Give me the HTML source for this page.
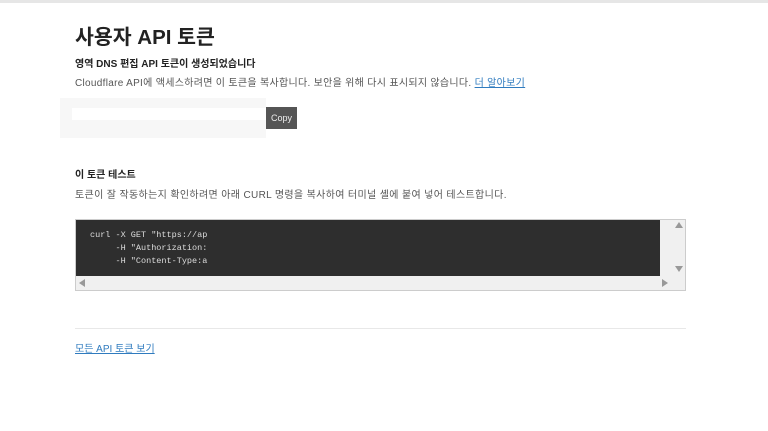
<!DOCTYPE html>
<html><head><meta charset="utf-8"><style>
body{margin:0;width:768px;height:431px;background:#fff;position:relative;overflow:hidden;font-family:"Liberation Sans","Noto Sans CJK KR",sans-serif;color:#333}
.top{position:absolute;left:0;top:0;width:768px;height:3px;background:#e6e6e6}
.a{position:absolute;white-space:nowrap}
a{color:#2f7bbf;text-decoration:underline}
</style></head><body>
<div class="top"></div>
<div class="a" style="left:75px;top:20px;font-size:20.5px;font-weight:bold;color:#222">사용자 API 토큰</div>
<div class="a" style="left:75px;top:55px;font-size:10px;font-weight:bold;color:#222">영역 DNS 편집 API 토큰이 생성되었습니다</div>
<div class="a" style="left:75px;top:74px;font-size:10px;letter-spacing:0.3px;color:#555">Cloudflare API에 액세스하려면 이 토큰을 복사합니다. 보안을 위해 다시 표시되지 않습니다. <a>더 알아보기</a></div>
<div class="a" style="left:60px;top:98px;width:206px;height:40px;background:#f7f7f7"></div>
<div class="a" style="left:72px;top:108px;width:194px;height:12px;background:#fff"></div>
<div class="a" style="left:266px;top:107px;width:31px;height:22px;background:#555;color:#eee;font-size:9px;line-height:22px;text-align:center">Copy</div>
<div class="a" style="left:75px;top:166px;font-size:10px;font-weight:bold;color:#222">이 토큰 테스트</div>
<div class="a" style="left:75px;top:186px;font-size:10px;letter-spacing:0.35px;color:#555">토큰이 잘 작동하는지 확인하려면 아래 CURL 명령을 복사하여 터미널 셸에 붙여 넣어 테스트합니다.</div>
<div class="a" style="left:75px;top:219px;width:611px;height:72px;border:1px solid #ccc;background:#f0f0f0;box-sizing:border-box"></div>
<div class="a" style="left:76px;top:220px;width:584px;height:56px;background:#2e2e2e"></div>
<div class="a" style="left:90px;top:229px;font:8.5px/13px 'Liberation Mono',monospace;color:#ddd;white-space:pre">curl -X GET "https://ap
     -H "Authorization:
     -H "Content-Type:a</div>
<div class="a" style="left:675px;top:222px;width:0;height:0;border:4px solid transparent;border-bottom:6px solid #999;border-top:0"></div>
<div class="a" style="left:675px;top:266px;width:0;height:0;border:4px solid transparent;border-top:6px solid #999;border-bottom:0"></div>
<div class="a" style="left:79px;top:279px;width:0;height:0;border:4px solid transparent;border-right:6px solid #999;border-left:0"></div>
<div class="a" style="left:662px;top:279px;width:0;height:0;border:4px solid transparent;border-left:6px solid #999;border-right:0"></div>
<div class="a" style="left:75px;top:328px;width:611px;height:1px;background:#e8e8e8"></div>
<div class="a" style="left:75px;top:340px;font-size:10px"><a>모든 API 토큰 보기</a></div>
</body></html>
